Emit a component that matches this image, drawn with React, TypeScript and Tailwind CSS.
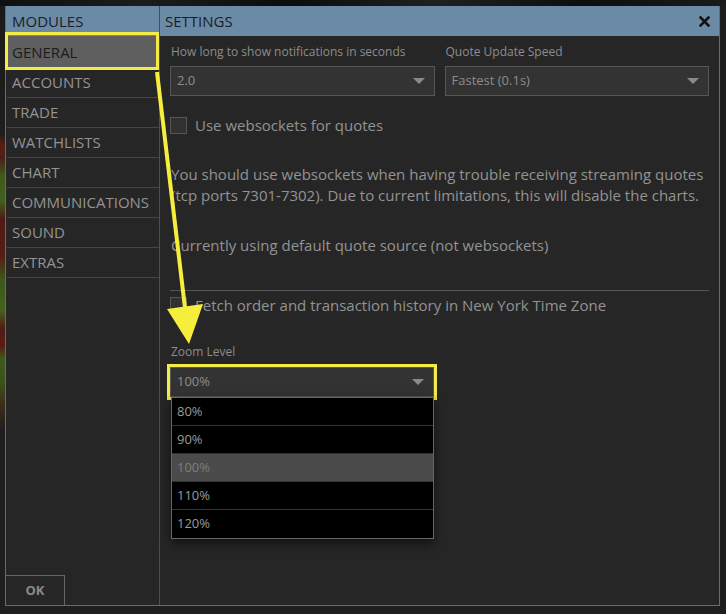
import React from 'react';

const modules = ['GENERAL', 'ACCOUNTS', 'TRADE', 'WATCHLISTS', 'CHART', 'COMMUNICATIONS', 'SOUND', 'EXTRAS'];
const zoomLevels = ['80%', '90%', '100%', '110%', '120%'];

function Caret() {
  return (
    <svg width="12" height="6" viewBox="0 0 12 6" className="shrink-0">
      <path d="M0 0 L12 0 L6 6 Z" fill="#8a8a8a" />
    </svg>
  );
}

function Select({ value, className = '' }: { value: string; className?: string }) {
  return (
    <div
      className={`flex h-[30px] items-center justify-between border border-[#575757] bg-[#333333] pl-[6px] pr-[9px] text-[13px] text-[#8d8d8d] ${className}`}
    >
      <span>{value}</span>
      <Caret />
    </div>
  );
}

function Checkbox({ label }: { label: string }) {
  return (
    <div className="flex h-[20px] items-center gap-[8px]">
      <div className="h-[17px] w-[17px] shrink-0 border border-[#555] bg-[#313131]" />
      <span className="text-[15px] leading-[20px] text-[#939393]">{label}</span>
    </div>
  );
}

export default function App() {
  return (
    <div className="relative flex h-[614px] w-[726px] flex-col overflow-hidden bg-[#1f1f1f] font-['Open_Sans',sans-serif]">
      {/* blurred app behind the dialog */}
      <div className="h-[6px] shrink-0 bg-[linear-gradient(to_right,#101010,#1c1c1c_20%,#0c0c0c_40%,#202020_60%,#0e0e0e_80%,#1a1a1a)]" />
      <div className="flex min-h-0 flex-1">
        <div className="w-[5px] shrink-0 bg-[linear-gradient(to_bottom,#1a1a1a_0%,#1e1e1e_21%,#5c1d15_23%,#4a2016_25%,#3f5b1c_28%,#42601d_32%,#4d1b13_35%,#571c14_41%,#3b571b_45%,#44621e_50%,#521c14_53%,#591d15_56%,#3e5a1c_58%,#3a521a_62%,#3a2a18_66%,#1e1e1e_70%,#1e1e1e_100%)]" />

        {/* dialog */}
        <div className="flex h-[600px] w-[715px] shrink-0 border-x border-b border-[#6a6a6a] bg-[#262626]">
          {/* modules column */}
          <div className="flex w-[154px] shrink-0 flex-col border-r border-[#4e4e4e]">
            <div className="flex h-[30px] shrink-0 items-center bg-[#6a8aa5] pl-[6px] text-[15px] text-[#1b1d26]">
              MODULES
            </div>
            <ul className="flex flex-col">
              {modules.map((m, i) => (
                <li
                  key={m}
                  className={
                    i === 0
                      ? 'flex h-[32px] items-center bg-[#5f5f5f] pl-[6px] text-[15px] text-[#1c1c1c]'
                      : 'ml-[1px] flex h-[30px] items-center border-b border-[#454545] pl-[5px] text-[15px] text-[#949494]'
                  }
                >
                  {m}
                </li>
              ))}
            </ul>
            <div className="flex-1" />
            <button className="flex h-[30px] w-[59px] items-center justify-center border-t border-r border-[#666] text-[13px] font-bold text-[#8a8a8a]">
              OK
            </button>
          </div>

          {/* settings column */}
          <div className="flex min-w-0 flex-1 flex-col">
            <div className="flex h-[30px] shrink-0 items-center justify-between bg-[#6a8aa5] pl-[5px] pr-[9px] text-[15px] text-[#1b1d26]">
              <span>SETTINGS</span>
              <svg width="11" height="11" viewBox="0 0 11 11">
                <path d="M1.5 1.5 L9.5 9.5 M9.5 1.5 L1.5 9.5" stroke="#111" strokeWidth="2.6" strokeLinecap="square" />
              </svg>
            </div>

            <div className="flex flex-col px-[10px] pt-[8px]">
              <div className="grid grid-cols-2 gap-x-[10px]">
                <div className="flex flex-col gap-[6px]">
                  <label className="pl-[1px] text-[12px] leading-[16px] text-[#8d8d8d]">How long to show notifications in seconds</label>
                  <Select value="2.0" />
                </div>
                <div className="flex flex-col gap-[6px]">
                  <label className="pl-[1px] text-[12px] leading-[16px] text-[#8d8d8d]">Quote Update Speed</label>
                  <Select value="Fastest (0.1s)" />
                </div>
              </div>

              <div className="mt-[19px]">
                <Checkbox label="Use websockets for quotes" />
              </div>

              <p className="mt-[29px] pl-[1px] text-[15px] leading-[21px] text-[#939393]">
                You should use websockets when having trouble receiving streaming quotes (tcp ports 7301-7302). Due to current limitations, this will disable the charts.
              </p>

              <p className="mt-[29px] pl-[1px] text-[15px] leading-[21px] text-[#939393]">
                Currently using default quote source (not websockets)
              </p>

              <hr className="mt-[34px] border-t border-[#555]" />

              <div className="mt-[4px]">
                <Checkbox label="Fetch order and transaction history in New York Time Zone" />
              </div>

              <label className="mt-[29px] pl-[1px] text-[12px] leading-[16px] text-[#8d8d8d]">Zoom Level</label>

              <div className="relative mt-[7px] w-[264px]">
                <Select value="100%" className="outline-3 outline-[#f3eb47]" />
                <ul className="absolute left-[1px] top-[30px] z-10 w-[263px] border border-[#666] bg-black shadow-[0_4px_10px_rgba(0,0,0,0.6)]">
                  {zoomLevels.map((z, i) => (
                    <li
                      key={z}
                      className={`flex h-[28px] items-center pl-[5px] text-[13px] ${i < zoomLevels.length - 1 ? 'border-b border-[#333]' : ''} ${
                        z === '100%' ? 'bg-[#4b4b4b] text-[#7d7d7d]' : 'text-[#9a9a9a]'
                      }`}
                    >
                      {z}
                    </li>
                  ))}
                </ul>
              </div>
            </div>
          </div>
        </div>
        <div className="flex-1 bg-[#1d1d1d]" />
      </div>

      {/* annotation: highlight box and arrow */}
      <div className="pointer-events-none absolute left-[5px] top-[32px] h-[38px] w-[154px] border-3 border-[#f3eb47]" />
      <svg className="pointer-events-none absolute left-0 top-0" width="726" height="614" viewBox="0 0 726 614">
        <line x1="157" y1="72" x2="185" y2="308" stroke="#f6ee3c" strokeWidth="4" />
        <polygon points="167,309 203,304 189,344" fill="#f6ee3c" />
      </svg>
    </div>
  );
}
